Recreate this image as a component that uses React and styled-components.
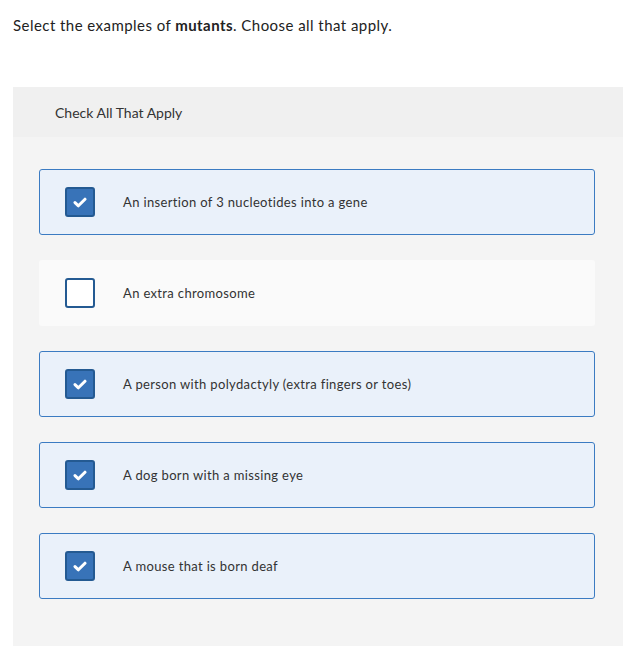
import React from "react";
import styled, { createGlobalStyle } from "styled-components";

const GlobalStyle = createGlobalStyle`
  html, body {
    margin: 0;
    padding: 0;
    background: #fff;
    font-family: "Lato", "Liberation Sans", sans-serif;
  }
`;

const Page = styled.div`
  width: 626px;
  height: 646px;
  overflow: hidden;
  padding: 0 3px 0 13px;
  box-sizing: border-box;
`;

const Prompt = styled.p`
  margin: 0;
  padding-top: 15px;
  height: 87px;
  box-sizing: border-box;
  font-size: 15px;
  line-height: 20px;
  letter-spacing: 0.45px;
  color: #222;

  b {
    font-weight: 700;
  }
`;

const Panel = styled.section`
  background: #f4f4f4;
  min-height: 560px;
`;

const PanelHeader = styled.div`
  background: #f0f0f0;
  height: 50px;
  display: flex;
  align-items: center;
  padding-left: 42px;
  font-size: 14px;
  color: #333;
`;

const Options = styled.div`
  display: flex;
  flex-direction: column;
  gap: 25px;
  padding: 32px 28px 40px 26px;
`;

const Option = styled.label`
  display: flex;
  align-items: center;
  height: 66px;
  box-sizing: border-box;
  padding-left: 25px;
  border-radius: 3px;
  border: 1px solid ${p => (p.checked ? "#3b7bc2" : "transparent")};
  background: ${p => (p.checked ? "#eaf1fa" : "#fafafa")};
  cursor: pointer;
`;

const Box = styled.span`
  width: 30px;
  height: 30px;
  box-sizing: border-box;
  border-radius: 3px;
  border: 2px solid #245a92;
  background: ${p => (p.checked ? "#3873b8" : "#fff")};
  display: flex;
  align-items: center;
  justify-content: center;
  flex-shrink: 0;
`;

const Text = styled.span`
  margin-left: 28px;
  font-size: 13px;
  letter-spacing: 0.35px;
  color: #333;
`;

const Check = () => (
  <svg width="14" height="11" viewBox="0 0 14 11">
    <path
      d="M2 5.6 L5.4 8.8 L12 2.2"
      fill="none"
      stroke="#fff"
      strokeWidth="3"
      strokeLinecap="round"
      strokeLinejoin="round"
    />
  </svg>
);

const options = [
  { text: "An insertion of 3 nucleotides into a gene", checked: true },
  { text: "An extra chromosome", checked: false },
  { text: "A person with polydactyly (extra fingers or toes)", checked: true },
  { text: "A dog born with a missing eye", checked: true },
  { text: "A mouse that is born deaf", checked: true },
];

export default function App() {
  return (
    <Page>
      <GlobalStyle />
      <Prompt>
        Select the examples of <b>mutants</b>. Choose all that apply.
      </Prompt>
      <Panel>
        <PanelHeader>Check All That Apply</PanelHeader>
        <Options>
          {options.map(o => (
            <Option key={o.text} checked={o.checked}>
              <Box checked={o.checked}>{o.checked && <Check />}</Box>
              <Text>{o.text}</Text>
            </Option>
          ))}
        </Options>
      </Panel>
    </Page>
  );
}
